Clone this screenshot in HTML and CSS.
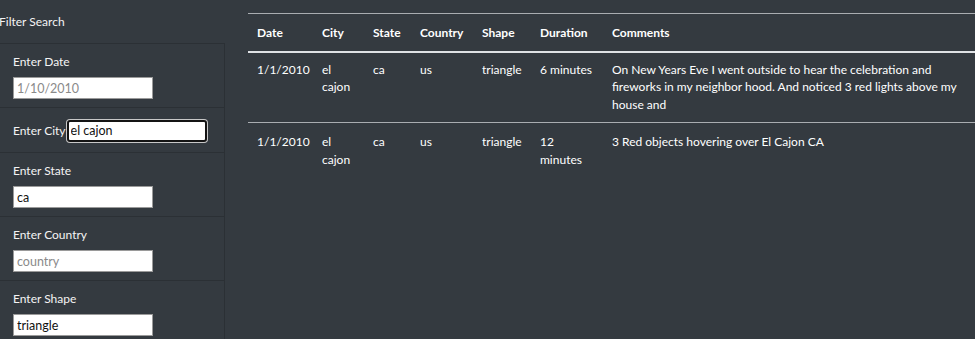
FILE: index.html
```html
<!DOCTYPE html>
<html lang="en">
<head>
    <meta charset="UTF-8">
    <meta name="viewport" content="width=device-width, initial-scale=1.0">
    <title>UFO Sightings</title>
    <link rel="stylesheet" href="styles.css">
</head>
<body>
    <div id="page">
        <div id="filters">
            <div class="heading">Filter Search</div>
            <ul class="filter-list">
                <li class="filter-item">
                    <label for="datetime">Enter Date</label>
                    <input type="text" id="datetime" placeholder="1/10/2010">
                </li>
                <li class="filter-item inline">
                    <label for="city">Enter City</label>
                    <input type="text" id="city" class="focused" value="el cajon">
                </li>
                <li class="filter-item">
                    <label for="state">Enter State</label>
                    <input type="text" id="state" value="ca">
                </li>
                <li class="filter-item">
                    <label for="country">Enter Country</label>
                    <input type="text" id="country" placeholder="country">
                </li>
                <li class="filter-item">
                    <label for="shape">Enter Shape</label>
                    <input type="text" id="shape" value="triangle">
                </li>
            </ul>
        </div>

        <div id="results">
            <table id="ufo-table">
                <thead>
                    <tr>
                        <th class="c-date">Date</th>
                        <th class="c-city">City</th>
                        <th class="c-state">State</th>
                        <th class="c-country">Country</th>
                        <th class="c-shape">Shape</th>
                        <th class="c-duration">Duration</th>
                        <th class="c-comments">Comments</th>
                    </tr>
                </thead>
                <tbody>
                    <tr>
                        <td>1/1/2010</td>
                        <td>el cajon</td>
                        <td>ca</td>
                        <td>us</td>
                        <td>triangle</td>
                        <td>6 minutes</td>
                        <td>On New Years Eve I went outside to hear the celebration and fireworks in my neighbor hood. And noticed 3 red lights above my house and</td>
                    </tr>
                    <tr>
                        <td>1/1/2010</td>
                        <td>el cajon</td>
                        <td>ca</td>
                        <td>us</td>
                        <td>triangle</td>
                        <td>12 minutes</td>
                        <td>3 Red objects hovering over El Cajon CA</td>
                    </tr>
                </tbody>
            </table>
        </div>
    </div>
</body>
</html>
```

FILE: styles.css
```css
body {
    margin: 0;
    background-color: #343a40;
    color: #f4f4f4;
    font-family: Lato, "Open Sans", sans-serif;
    font-size: 12px;
    line-height: 18px;
    overflow: hidden;
}

#page {
    display: flex;
    align-items: flex-start;
}

#filters {
    width: 227px;
    flex-shrink: 0;
    margin-left: -2px;
}

.heading {
    padding: 13px 0 12px 1px;
}

.filter-list {
    list-style: none;
    margin: 0;
    padding: 0;
}

.filter-item {
    border: 1px solid #2b3035;
    border-top: none;
    padding: 9px 14px 8px 14px;
}

.filter-item:first-child {
    border-top: 1px solid #2b3035;
}

.filter-item label {
    display: block;
    margin-bottom: 6px;
}

.filter-item.inline {
    display: flex;
    align-items: center;
    gap: 0;
    height: 27px;
}

.filter-item.inline label {
    display: inline;
    margin: 0 1px 0 0;
}

.filter-item input {
    box-sizing: border-box;
    width: 140px;
    height: 22px;
    padding: 1px 3px;
    border: 1px solid #9a9a9a;
    background: #fff;
    color: #111;
    font-family: inherit;
    font-size: 12.5px;
}

.filter-item input::placeholder {
    color: #8a8a8a;
}

.filter-item input.focused {
    border: 2px solid #141414;
    border-radius: 3px;
    box-shadow: 0 0 0 1px #c8c8c8;
    padding: 0 2px;
}

#results {
    width: 727px;
    flex-shrink: 0;
    margin-left: 23px;
    padding-top: 13px;
}

#ufo-table {
    border-collapse: collapse;
    table-layout: fixed;
    width: 100%;
    color: #fff;
    line-height: 17.5px;
}

#ufo-table th,
#ufo-table td {
    box-sizing: border-box;
    padding: 8px 9px 9px;
    text-align: left;
    vertical-align: top;
    border-top: 1px solid #a9adb1;
}

#ufo-table tbody tr + tr td {
    padding-top: 10px;
}

#ufo-table thead th {
    font-weight: bold;
    padding: 10px 9px 9px;
    border-bottom: 2px solid #dfe2e5;
}

.c-date { width: 65px; }
.c-city { width: 51px; }
.c-state { width: 47px; }
.c-country { width: 62px; }
.c-shape { width: 58px; }
.c-duration { width: 72px; }
.c-comments { width: 372px; }
```
